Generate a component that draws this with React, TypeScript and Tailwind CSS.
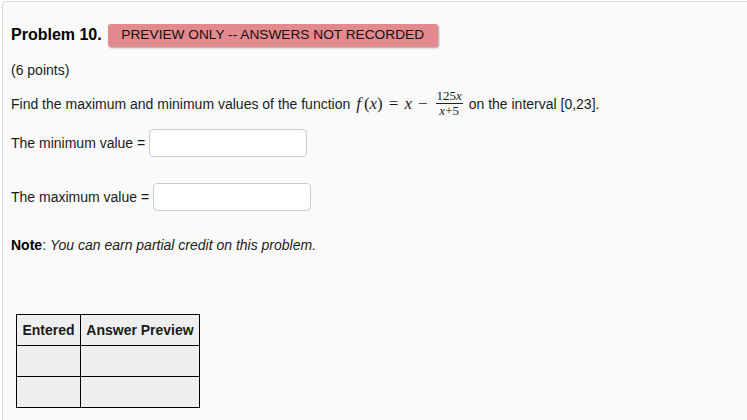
import React from "react";

export default function App() {
  return (
    <div className="w-[747px] h-[420px] bg-white pt-[1px] pl-[2px] overflow-hidden" style={{ fontFamily: '"Liberation Sans", Arial, sans-serif' }}>
      <div className="h-full border-t border-l border-[#dcdcdc] rounded-tl-[4px] bg-[#fafafa] pl-[8px] text-[14px] text-[#1a1a1a]">
        <div className="flex items-center pt-[21px]">
          <span className="font-bold text-[16px] text-black">Problem 10.</span>
          <span className="ml-[6px] bg-[#e38a8e] rounded-[3px] shadow-[1px_1px_2px_rgba(0,0,0,0.35)] h-[23px] w-[330px] flex items-center justify-center text-[13.7px] text-[#111]">
            PREVIEW ONLY -- ANSWERS NOT RECORDED
          </span>
        </div>
        <div className="mt-[13px]">(6 points)</div>
        <div className="mt-[12px] flex items-center h-[22px]">
          <span>Find the maximum and minimum values of the function&nbsp;</span>
          <span className="flex items-center text-[17px] ml-[2px]" style={{ fontFamily: '"Liberation Serif", "Times New Roman", serif' }}>
            <i>f</i>
            <span className="ml-[3px]">(</span><i>x</i><span>)</span>
            <span className="mx-[6px]">=</span>
            <i>x</i>
            <span className="mx-[6px]">−</span>
            <span className="inline-flex flex-col items-center text-[13px] leading-[12px] mx-[2px] -mt-[2px]">
              <span className="border-b border-[#222] px-[1px] pb-[1px]">125<i>x</i></span>
              <span className="pt-[1px]"><i>x</i>+5</span>
            </span>
          </span>
          <span>&nbsp;on the interval [0,23].</span>
        </div>
        <div className="mt-[14px] flex items-center">
          <span>The minimum value =&nbsp;</span>
          <span className="w-[158px] h-[28px] bg-white border border-[#cccccc] rounded-[4px]"></span>
        </div>
        <div className="mt-[26px] flex items-center">
          <span>The maximum value =&nbsp;</span>
          <span className="w-[158px] h-[28px] bg-white border border-[#cccccc] rounded-[4px]"></span>
        </div>
        <div className="mt-[24px]">
          <b className="text-black">Note</b>: <i>You can earn partial credit on this problem.</i>
        </div>
        <table className="mt-[58px] ml-[5px] border-collapse border border-black text-[14px]">
          <thead>
            <tr className="h-[31px] bg-[#efefef]">
              <th className="border border-black px-[4px] font-bold w-[64px]">Entered</th>
              <th className="border border-black px-[4px] font-bold w-[119px]">Answer Preview</th>
            </tr>
          </thead>
          <tbody>
            <tr className="h-[31px] bg-[#efefef]">
              <td className="border border-black"></td>
              <td className="border border-black"></td>
            </tr>
            <tr className="h-[31px] bg-[#efefef]">
              <td className="border border-black"></td>
              <td className="border border-black"></td>
            </tr>
          </tbody>
        </table>
      </div>
    </div>
  );
}
